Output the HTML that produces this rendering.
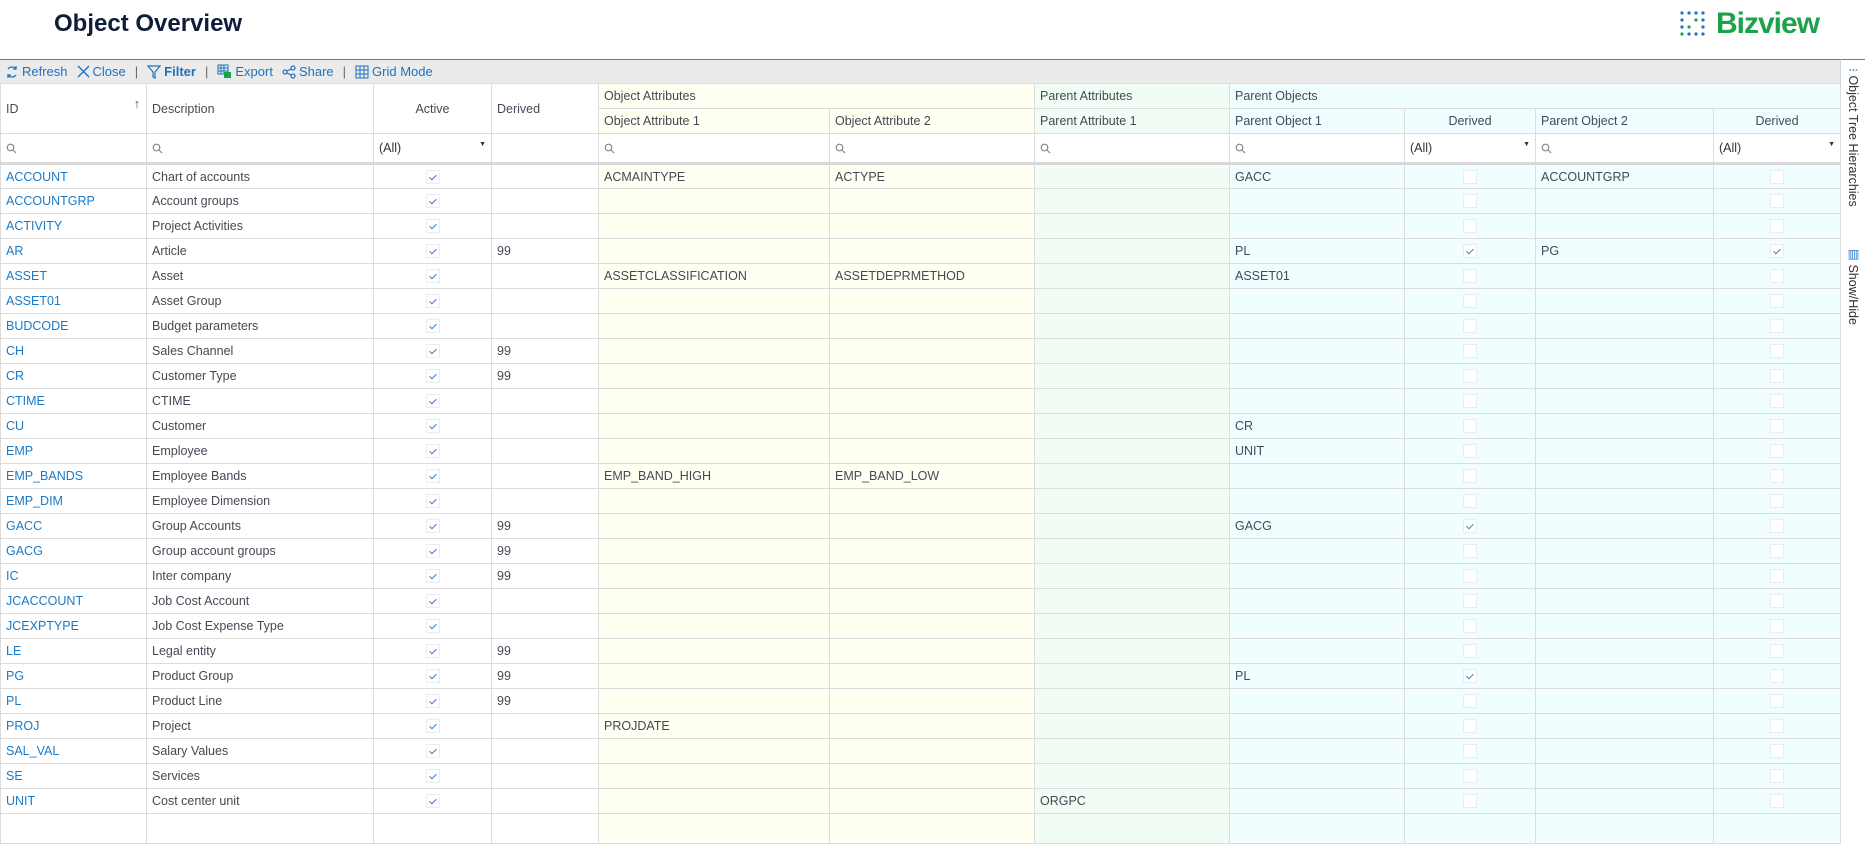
<!DOCTYPE html>
<html><head><meta charset="utf-8"><style>
*{box-sizing:border-box;margin:0;padding:0}
body{width:1865px;height:833px;overflow:hidden;background:#fff;font-family:"Liberation Sans",sans-serif;font-size:12.5px;color:#444a55;position:relative}
.title{position:absolute;left:54px;top:10px;font-size:24px;font-weight:bold;color:#0f1d3a}
.logo{position:absolute;left:1679px;top:8px;height:32px;display:flex;align-items:center}
.logo span{font-size:30px;font-weight:bold;color:#1aa34a;margin-left:9px;letter-spacing:-1px}
.tb{position:absolute;left:0;top:59px;width:1840px;height:24px;background:#ebebeb;border-top:1px solid #3b84c8;display:flex;align-items:center;padding-left:5px;color:#1e73be;font-size:13px}
.tb .it{display:flex;align-items:center;margin-right:9px}
.tb .it svg{margin-right:3px}
.tb .sep{color:#666;margin-right:9px}
.side{position:absolute;left:1840px;top:59px;width:25px;height:774px;border-left:1px solid #c9d3e0;border-top:1px solid #3b84c8;background:#fff}
.vt{position:absolute;left:5px;writing-mode:vertical-rl;font-size:12.5px;color:#333;white-space:nowrap}
table{position:absolute;left:0;top:83px;border-collapse:collapse;table-layout:fixed;width:1840px}
td,th{border:1px solid #dcdcdc;height:25px;padding:0 5px;font-weight:normal;text-align:left;white-space:nowrap;overflow:hidden}
th{color:#444a55}
.oa{background:#fffff2}.pa{background:#f1fcf4}.po{background:#f0feff}
.c{text-align:center}
tr.f td{height:30px;border-bottom:3px solid #d8d8d8;background:#fff}
.id{color:#1b7ac6}
.cb{display:inline-block;width:14px;height:14px;border:1px solid #ececec;background:#fff;vertical-align:middle;position:relative}
.cb.k:after{content:"";position:absolute;left:4px;top:2px;width:3px;height:6px;border:solid #3d7fd0;border-width:0 1.2px 1.2px 0;transform:rotate(45deg)}
.dd{display:flex;justify-content:space-between;color:#333}
.s svg{display:block}
</style></head><body>
<div class="title">Object Overview</div>
<div class="logo"><svg width="28" height="28" viewBox="0 0 28 28"><g fill="#1e73be"><circle cx="3" cy="3" r="1.6"/><circle cx="10" cy="3" r="1.6"/><circle cx="17" cy="3" r="1.6"/><circle cx="24" cy="3" r="1.6"/><circle cx="3" cy="10" r="1.6"/><circle cx="24" cy="10" r="1.6"/><circle cx="3" cy="17" r="1.6"/><circle cx="24" cy="17" r="1.6"/><circle cx="10" cy="24" r="1.6"/><circle cx="17" cy="24" r="1.6"/><circle cx="24" cy="24" r="1.6"/></g><g fill="#1aa34a"><circle cx="17" cy="10" r="1.6"/><circle cx="10" cy="17" r="1.6"/><circle cx="3" cy="24" r="1.6"/></g></svg><span>Bizview</span></div>
<div class="tb">
<div class="it"><svg width="14" height="14" viewBox="0 0 14 14" fill="none" stroke="#1e73be" stroke-width="1.3"><path d="M3 4a5 5 0 0 1 8 0M11 10a5 5 0 0 1-8 0M11 1v3H8M3 13v-3h3"/></svg>Refresh</div>
<div class="it"><svg width="13" height="13" viewBox="0 0 13 13" stroke="#1e73be" stroke-width="1.4"><path d="M1 1l11 11M12 1L1 12"/></svg>Close</div><span class="sep">|</span>
<div class="it"><svg width="14" height="14" viewBox="0 0 14 14" fill="none" stroke="#1e73be" stroke-width="1.2"><path d="M1 1h12L8 7v6L6 12V7z"/></svg><b>Filter</b></div><span class="sep">|</span>
<div class="it"><svg width="15" height="15" viewBox="0 0 15 15" fill="none" stroke="#1e73be"><path d="M1 1h10v9H1zM1 4h10M1 7h10M4 1v9M7 1v9"/><rect x="7" y="8" width="7" height="6" fill="#1aa34a" stroke="none"/></svg>Export</div>
<div class="it"><svg width="14" height="14" viewBox="0 0 14 14" fill="none" stroke="#1e73be" stroke-width="1.2"><circle cx="3" cy="7" r="2"/><circle cx="11" cy="3" r="2"/><circle cx="11" cy="11" r="2"/><path d="M5 6l4-2M5 8l4 2"/></svg>Share</div><span class="sep">|</span>
<div class="it"><svg width="14" height="14" viewBox="0 0 14 14" fill="none" stroke="#1e73be"><path d="M1 1h12v12H1zM1 5h12M1 9h12M5 1v12M9 1v12"/></svg>Grid Mode</div>
</div>
<div class="side"><div class="vt" style="top:8px"><span style="color:#1e73be">⁝</span> Object Tree Hierarchies</div><div class="vt" style="top:186px"><span style="color:#1e73be">▥</span> Show/Hide</div></div>
<table>
<colgroup><col style="width:146px"><col style="width:227px"><col style="width:118px"><col style="width:107px"><col style="width:231px"><col style="width:205px"><col style="width:195px"><col style="width:175px"><col style="width:131px"><col style="width:178px"><col style="width:127px"></colgroup>
<tr><th rowspan="2" style="position:relative">ID<span style="position:absolute;right:6px;top:13px">↑</span></th><th rowspan="2">Description</th><th rowspan="2" class="c">Active</th><th rowspan="2">Derived</th><th colspan="2" class="oa">Object Attributes</th><th class="pa">Parent Attributes</th><th colspan="4" class="po">Parent Objects</th></tr>
<tr><th class="oa">Object Attribute 1</th><th class="oa">Object Attribute 2</th><th class="pa">Parent Attribute 1</th><th class="po">Parent Object 1</th><th class="po c">Derived</th><th class="po">Parent Object 2</th><th class="po c">Derived</th></tr>
<tr class="f"><td class="s">Q</td><td class="s">Q</td><td><div class="dd"><span>(All)</span><span style="font-size:7px">▼</span></div></td><td></td><td class="s">Q</td><td class="s">Q</td><td class="s">Q</td><td class="s">Q</td><td><div class="dd"><span>(All)</span><span style="font-size:7px">▼</span></div></td><td class="s">Q</td><td><div class="dd"><span>(All)</span><span style="font-size:7px">▼</span></div></td></tr>
</table>
<script>
var ic='<svg width="11" height="11" viewBox="0 0 11 11" fill="none" stroke="#888" stroke-width="1.2"><circle cx="4.5" cy="4.5" r="3.3"/><path d="M7 7l3 3"/></svg>';
document.querySelectorAll('td.s').forEach(function(e){e.innerHTML=ic;});
var rows=[["ACCOUNT","Chart of accounts","","ACMAINTYPE","ACTYPE","","GACC",0,"ACCOUNTGRP",0],
["ACCOUNTGRP","Account groups","","","","","",0,"",0],
["ACTIVITY","Project Activities","","","","","",0,"",0],
["AR","Article","99","","","","PL",1,"PG",1],
["ASSET","Asset","","ASSETCLASSIFICATION","ASSETDEPRMETHOD","","ASSET01",0,"",0],
["ASSET01","Asset Group","","","","","",0,"",0],
["BUDCODE","Budget parameters","","","","","",0,"",0],
["CH","Sales Channel","99","","","","",0,"",0],
["CR","Customer Type","99","","","","",0,"",0],
["CTIME","CTIME","","","","","",0,"",0],
["CU","Customer","","","","","CR",0,"",0],
["EMP","Employee","","","","","UNIT",0,"",0],
["EMP_BANDS","Employee Bands","","EMP_BAND_HIGH","EMP_BAND_LOW","","",0,"",0],
["EMP_DIM","Employee Dimension","","","","","",0,"",0],
["GACC","Group Accounts","99","","","","GACG",1,"",0],
["GACG","Group account groups","99","","","","",0,"",0],
["IC","Inter company","99","","","","",0,"",0],
["JCACCOUNT","Job Cost Account","","","","","",0,"",0],
["JCEXPTYPE","Job Cost Expense Type","","","","","",0,"",0],
["LE","Legal entity","99","","","","",0,"",0],
["PG","Product Group","99","","","","PL",1,"",0],
["PL","Product Line","99","","","","",0,"",0],
["PROJ","Project","","PROJDATE","","","",0,"",0],
["SAL_VAL","Salary Values","","","","","",0,"",0],
["SE","Services","","","","","",0,"",0],
["UNIT","Cost center unit","","","","ORGPC","",0,"",0]];
var t=document.querySelector("table"),h="";
rows.forEach(function(r){h+='<tr><td class="id">'+r[0]+'</td><td>'+r[1]+'</td><td class="c"><span class="cb k"></span></td><td>'+r[2]+'</td><td class="oa">'+r[3]+'</td><td class="oa">'+r[4]+'</td><td class="pa">'+r[5]+'</td><td class="po">'+r[6]+'</td><td class="po c"><span class="cb'+(r[7]?' k':'')+'"></span></td><td class="po">'+r[8]+'</td><td class="po c"><span class="cb'+(r[9]?' k':'')+'"></span></td></tr>';});
h+='<tr><td style="height:30px"></td><td></td><td></td><td></td><td class="oa"></td><td class="oa"></td><td class="pa"></td><td class="po"></td><td class="po"></td><td class="po"></td><td class="po"></td></tr>';
t.insertAdjacentHTML("beforeend",h);
</script>
</body></html>
